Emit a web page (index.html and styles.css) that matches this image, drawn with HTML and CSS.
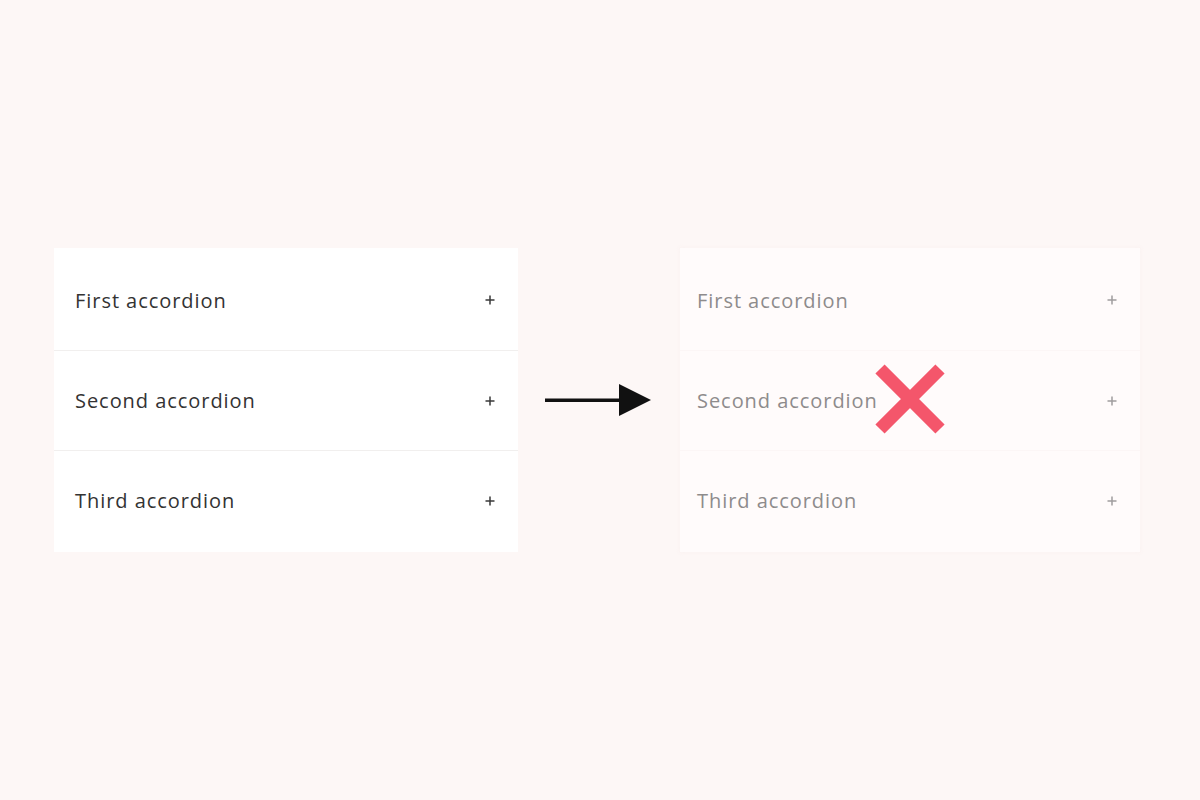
FILE: index.html
```html
<!DOCTYPE html>
<html lang="en">
<head>
    <meta charset="UTF-8">
    <meta name="viewport" content="width=device-width, initial-scale=1.0">
    <title>Accordion Before / After</title>
    <link rel="stylesheet" href="styles.css">
</head>
<body>
    <div class="compare">
        <div class="accordion">
            <div class="accordion-item"><span>First accordion</span><svg class="plus" width="10" height="10" viewBox="0 0 10 10"><path d="M5 0.5V9.5M0.5 5H9.5"/></svg></div>
            <div class="accordion-item"><span>Second accordion</span><svg class="plus" width="10" height="10" viewBox="0 0 10 10"><path d="M5 0.5V9.5M0.5 5H9.5"/></svg></div>
            <div class="accordion-item"><span>Third accordion</span><svg class="plus" width="10" height="10" viewBox="0 0 10 10"><path d="M5 0.5V9.5M0.5 5H9.5"/></svg></div>
        </div>

        <div class="arrow">
            <svg width="106" height="32" viewBox="0 0 106 32">
                <rect x="0" y="14.5" width="76" height="3.5" fill="#111"/>
                <polygon points="74,0 106,16 74,32" fill="#111"/>
            </svg>
        </div>

        <div class="accordion faded">
            <div class="accordion-item"><span>First accordion</span><svg class="plus" width="10" height="10" viewBox="0 0 10 10"><path d="M5 0.5V9.5M0.5 5H9.5"/></svg></div>
            <div class="accordion-item"><span>Second accordion</span><svg class="plus" width="10" height="10" viewBox="0 0 10 10"><path d="M5 0.5V9.5M0.5 5H9.5"/></svg></div>
            <div class="accordion-item"><span>Third accordion</span><svg class="plus" width="10" height="10" viewBox="0 0 10 10"><path d="M5 0.5V9.5M0.5 5H9.5"/></svg></div>
            <svg class="cross" width="72" height="72" viewBox="0 0 72 72">
                <path d="M6 6 L66 66 M66 6 L6 66" stroke="#f4566b" stroke-width="13"/>
            </svg>
        </div>
    </div>
</body>
</html>
```

FILE: styles.css
```css
:root {
    --page-bg: #fdf7f6;
    --white: #ffffff;
    --text: #333333;
    --muted: #8e8b8c;
    --line: #f1efee;
}
body {
    margin: 0;
    height: 800px;
    background: var(--page-bg);
    font-family: 'Open Sans', sans-serif;
    display: flex;
    align-items: center;
}
.compare {
    display: grid;
    grid-template-columns: 464px 162px 460px;
    align-items: center;
    margin-left: 54px;
}
.accordion {
    background: var(--white);
    display: flex;
    flex-direction: column;
    padding: 2px 0;
    position: relative;
}
.accordion-item {
    box-sizing: border-box;
    height: 100px;
    padding: 0 23px 0 21px;
    display: flex;
    align-items: center;
    justify-content: space-between;
    font-size: 20px;
    color: var(--text);
    letter-spacing: 0.95px;
}
.accordion-item + .accordion-item {
    border-top: 1.5px solid var(--line);
}
.plus {
    stroke: #3a3a3a;
    stroke-width: 1.5;
    fill: none;
}
.arrow {
    display: flex;
    justify-content: center;
    padding-right: 2px;
}
.arrow svg {
    display: block;
}
.faded {
    background: #fffbfb;
    box-shadow: 0 0 4px rgba(245, 232, 232, 0.4);
}
.faded .accordion-item {
    color: var(--muted);
    padding: 0 23px 0 17px;
}
.faded .plus {
    stroke: #a09d9e;
}
.faded .accordion-item + .accordion-item {
    border-top: 1.5px solid #fcf6f6;
}
.cross {
    position: absolute;
    left: 194px;
    top: 115px;
}
```
